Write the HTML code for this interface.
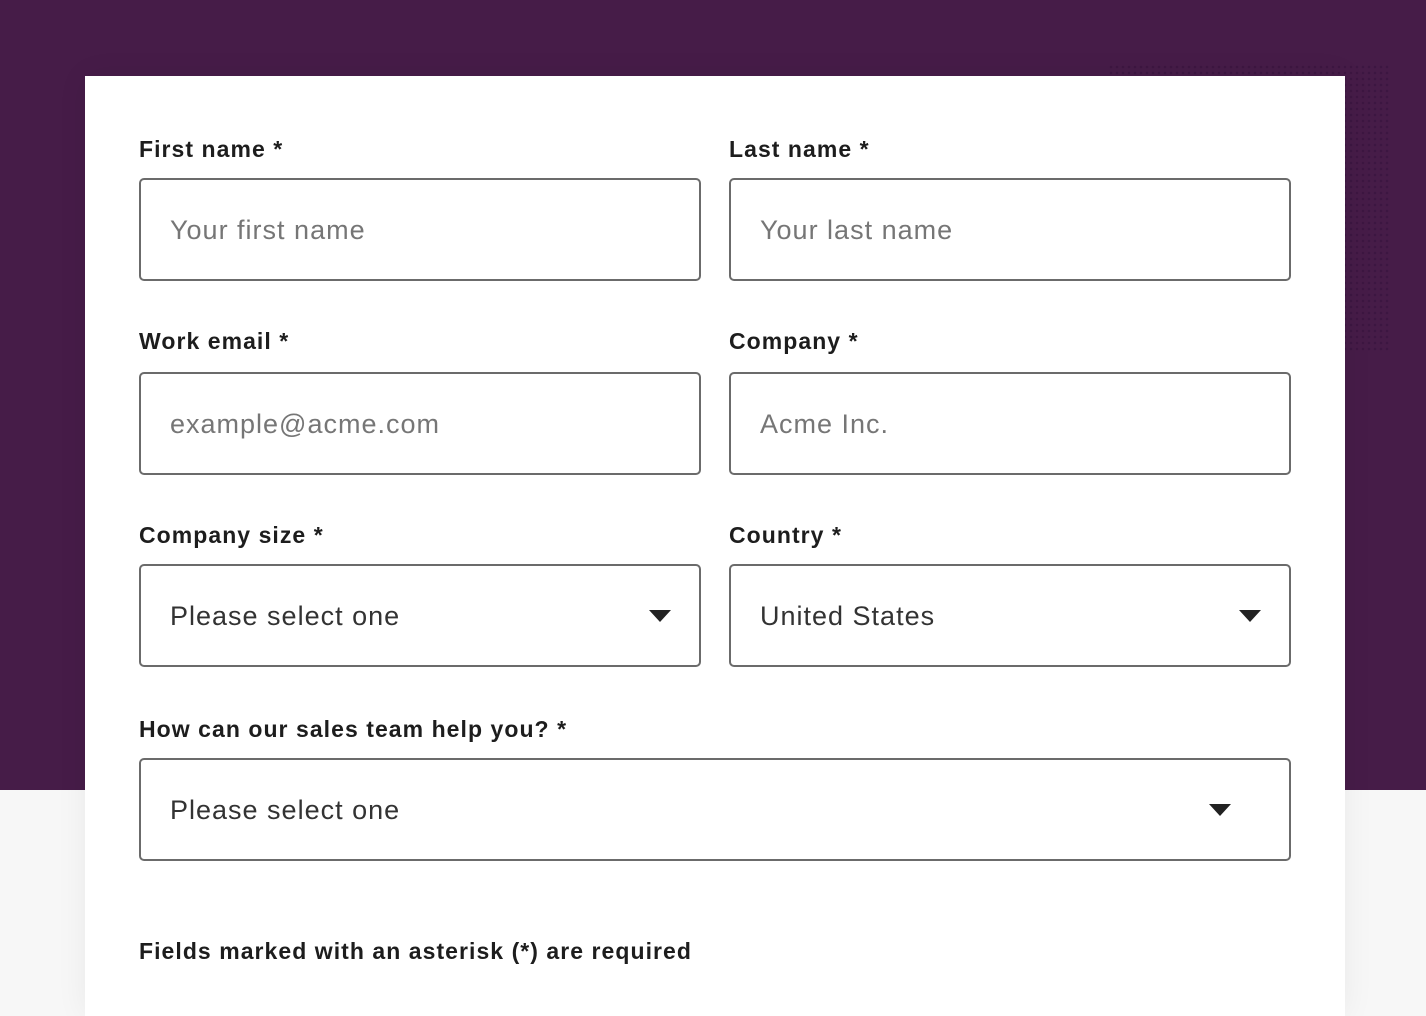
<!DOCTYPE html>
<html><head><style>
body{margin:0;width:1426px;height:1008px;overflow:hidden;background:#f7f7f7;font-family:"Liberation Sans",sans-serif;position:relative}
.bg{position:absolute;left:0;top:0;width:1426px;height:790px;background:#461c48}
.dots{position:absolute;left:1108px;top:64px;width:282px;height:288px;background-image:radial-gradient(#3c1641 1px,transparent 1.5px);background-size:6px 6px}
.card{position:absolute;left:85px;top:76px;width:1260px;height:940px;background:#fff;box-shadow:0 0 30px rgba(0,0,0,.06)}
.l{position:absolute;font-size:23px;font-weight:bold;color:#1d1d1d;letter-spacing:1.05px}
.i{position:absolute;box-sizing:border-box;height:103px;border:2px solid #6b6b6b;border-radius:5px;font-size:27px;color:#767676;padding-left:29px;line-height:101px;letter-spacing:1px}
.s{color:#333}
.a{position:absolute;top:44px;width:0;height:0;border-left:11px solid transparent;border-right:11px solid transparent;border-top:12px solid #222}
</style></head><body>
<div class="bg"></div><div class="dots"></div>
<div class="card">
<div class="l" style="left:54px;top:60px">First name *</div>
<div class="l" style="left:644px;top:60px">Last name *</div>
<div class="i" style="left:54px;top:102px;width:562px">Your first name</div>
<div class="i" style="left:644px;top:102px;width:562px">Your last name</div>
<div class="l" style="left:54px;top:252px">Work email *</div>
<div class="l" style="left:644px;top:252px">Company *</div>
<div class="i" style="left:54px;top:296px;width:562px">example@acme.com</div>
<div class="i" style="left:644px;top:296px;width:562px">Acme Inc.</div>
<div class="l" style="left:54px;top:446px">Company size *</div>
<div class="l" style="left:644px;top:446px">Country *</div>
<div class="i s" style="left:54px;top:488px;width:562px">Please select one<div class="a" style="left:508px"></div></div>
<div class="i s" style="left:644px;top:488px;width:562px">United States<div class="a" style="left:508px"></div></div>
<div class="l" style="left:54px;top:640px">How can our sales team help you? *</div>
<div class="i s" style="left:54px;top:682px;width:1152px">Please select one<div class="a" style="left:1068px"></div></div>
<div class="l" style="left:54px;top:862px">Fields marked with an asterisk (*) are required</div>
</div>
</body></html>
